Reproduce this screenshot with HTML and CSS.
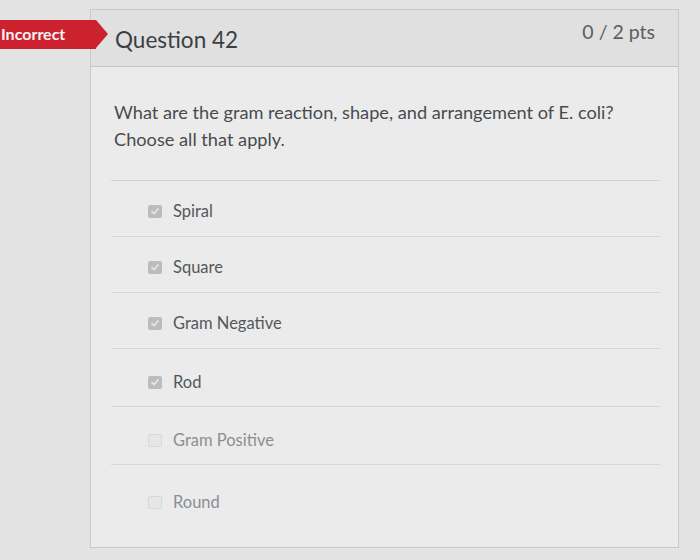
FILE: index.html
```html
<!DOCTYPE html>
<html>
<head>
<meta charset="utf-8">
<link rel="stylesheet" href="styles.css">
</head>
<body>
<div class="page">
  <div class="badge">Incorrect</div>
  <div class="card">
    <div class="card-header">
      <span class="title">Question 42</span>
      <span class="pts">0 / 2 pts</span>
    </div>
    <div class="card-body">
      <p class="question">What are the gram reaction, shape, and arrangement of E. coli?<br>Choose all that apply.</p>
      <div class="answers">
        <div class="answer checked"><span class="box"><svg viewBox="0 0 12 12" width="12" height="12"><path d="M2.5 6.2 L5 8.5 L9.5 3.5" fill="none" stroke="#e6e6e6" stroke-width="1.8"/></svg></span><span class="label">Spiral</span></div>
        <div class="answer checked"><span class="box"><svg viewBox="0 0 12 12" width="12" height="12"><path d="M2.5 6.2 L5 8.5 L9.5 3.5" fill="none" stroke="#e6e6e6" stroke-width="1.8"/></svg></span><span class="label">Square</span></div>
        <div class="answer checked"><span class="box"><svg viewBox="0 0 12 12" width="12" height="12"><path d="M2.5 6.2 L5 8.5 L9.5 3.5" fill="none" stroke="#e6e6e6" stroke-width="1.8"/></svg></span><span class="label">Gram Negative</span></div>
        <div class="answer checked tall"><span class="box"><svg viewBox="0 0 12 12" width="12" height="12"><path d="M2.5 6.2 L5 8.5 L9.5 3.5" fill="none" stroke="#e6e6e6" stroke-width="1.8"/></svg></span><span class="label">Rod</span></div>
        <div class="answer unchecked tall"><span class="box"></span><span class="label">Gram Positive</span></div>
        <div class="answer unchecked last"><span class="box"></span><span class="label">Round</span></div>
      </div>
    </div>
  </div>
</div>
</body>
</html>
```

FILE: styles.css
```css
html, body {
  margin: 0;
  padding: 0;
}
body {
  background: #e3e3e3;
  font-family: Lato, "Open Sans", sans-serif;
  width: 700px;
  height: 560px;
  overflow: hidden;
}
.page {
  position: relative;
  padding: 9px 0 0 90px;
}
.badge {
  position: absolute;
  left: 0;
  top: 20px;
  height: 29px;
  width: 96px;
  background: #cc2230;
  color: #f7f3f3;
  font-weight: bold;
  font-size: 16px;
  line-height: 28px;
  padding-left: 1px;
  box-sizing: border-box;
  z-index: 2;
}
.badge::after {
  content: "";
  position: absolute;
  right: -12px;
  top: 0;
  border-top: 14.5px solid transparent;
  border-bottom: 14.5px solid transparent;
  border-left: 12px solid #cc2230;
}
.card {
  width: 589px;
  height: 539px;
  border: 1px solid #c9c9c9;
  background: #ebebeb;
  box-sizing: border-box;
}
.card-header {
  height: 57px;
  background: #e0e0e0;
  border-bottom: 1px solid #c6c6c6;
  box-sizing: border-box;
  display: flex;
  justify-content: space-between;
  align-items: flex-start;
  padding: 0 23px 0 24px;
}
.title {
  font-size: 22.5px;
  color: #3b3f44;
  margin-top: 16px;
}
.pts {
  font-size: 19.5px;
  color: #5a5e62;
  margin-top: 10px;
}
.card-body {
  padding: 32px 18px 0 20px;
}
.question {
  margin: 0 0 0 3px;
  font-size: 18.2px;
  line-height: 27px;
  color: #484b4e;
}
.answers {
  margin-top: 27px;
  border-top: 1px solid #d4d4d4;
}
.answer {
  height: 56px;
  border-bottom: 1px solid #d6d6d6;
  box-sizing: border-box;
  display: flex;
  align-items: center;
  padding: 5px 0 0 37px;
}
.answer.tall {
  height: 58px;
  padding-top: 9px;
}
.answer.last {
  height: 58px;
  padding-top: 16px;
  border-bottom: none;
}
.box {
  width: 14px;
  height: 13px;
  border-radius: 2px;
  margin-right: 11px;
  box-sizing: border-box;
  display: flex;
  align-items: center;
  justify-content: center;
}
.checked .box {
  background: #bcbcbc;
}
.unchecked .box {
  border: 1px solid #d8d8d8;
  background: #e6e6e6;
}
.label {
  font-size: 16.5px;
}
.checked .label {
  color: #55585b;
}
.unchecked .label {
  color: #8c8e90;
}
```
